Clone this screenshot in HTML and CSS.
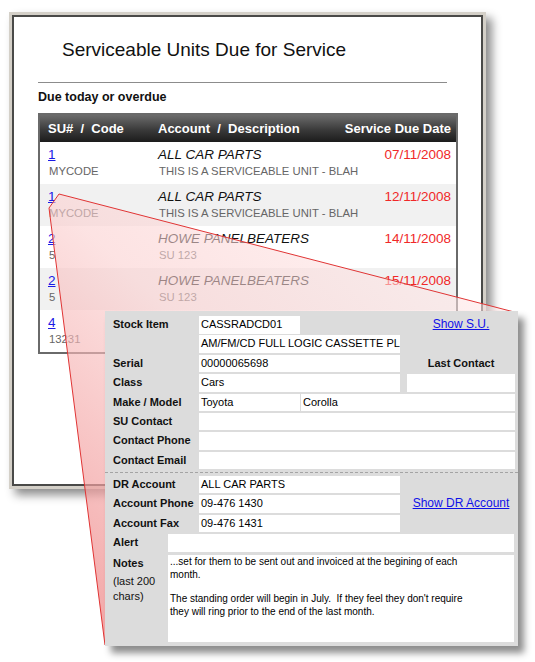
FILE: index.html
```html
<!DOCTYPE html>
<html lang="en">
<head>
  <meta charset="UTF-8" />
  <title>Serviceable Units Due for Service</title>
  <link rel="stylesheet" href="styles.css">
</head>
<body>

  <div class="stage">

    <!-- due list window -->
    <div class="page">
      <h1 class="page_title">Serviceable Units Due for Service</h1>
      <div class="rule"></div>
      <h2 class="section_title">Due today or overdue</h2>

      <div class="units">
        <div class="units_head">
          <span>SU# &nbsp;/ &nbsp;Code</span>
          <span>Account &nbsp;/ &nbsp;Description</span>
          <span class="due">Service Due Date</span>
        </div>

        <div class="unit_row">
          <div><a href="#">1</a><small>MYCODE</small></div>
          <div><em>ALL CAR PARTS</em><small>THIS IS A SERVICEABLE UNIT - BLAH</small></div>
          <div class="due">07/11/2008</div>
        </div>
        <div class="unit_row">
          <div><a href="#">1</a><small>MYCODE</small></div>
          <div><em>ALL CAR PARTS</em><small>THIS IS A SERVICEABLE UNIT - BLAH</small></div>
          <div class="due">12/11/2008</div>
        </div>
        <div class="unit_row">
          <div><a href="#">2</a><small>5</small></div>
          <div><em>HOWE PANELBEATERS</em><small>SU 123</small></div>
          <div class="due">14/11/2008</div>
        </div>
        <div class="unit_row">
          <div><a href="#">2</a><small>5</small></div>
          <div><em>HOWE PANELBEATERS</em><small>SU 123</small></div>
          <div class="due">15/11/2008</div>
        </div>
        <div class="unit_row">
          <div><a href="#">4</a><small>13231</small></div>
          <div></div>
          <div class="due"></div>
        </div>
      </div>
    </div>

    <!-- callout tail from the selected row to the detail panel -->
    <svg class="callout" width="535" height="662" viewBox="0 0 535 662">
      <defs>
        <linearGradient id="tail_fill" x1="1" y1="0" x2="0" y2="1">
          <stop offset="0" stop-color="#fff0f0" stop-opacity="0.55" />
          <stop offset="0.5" stop-color="#fbd0d0" stop-opacity="0.6" />
          <stop offset="1" stop-color="#ec7a7a" stop-opacity="0.75" />
        </linearGradient>
      </defs>
      <polygon points="59,194 518,313 105,645 49,208"
               fill="url(#tail_fill)"
               stroke="#e03434"
               stroke-width="1" />
    </svg>

    <!-- unit detail panel -->
    <div class="detail">
      <div class="detail_grid">
        <div class="label">Stock Item</div>
        <div class="box c1">CASSRADCD01</div>
        <div class="side"><a href="#">Show S.U.</a></div>

        <div class="box c12">AM/FM/CD FULL LOGIC CASSETTE PL</div>

        <div class="label">Serial</div>
        <div class="box c12">00000065698</div>
        <div class="side side_title">Last Contact</div>

        <div class="label">Class</div>
        <div class="box c12">Cars</div>
        <div class="box side"></div>

        <div class="label">Make / Model</div>
        <div class="box c1">Toyota</div>
        <div class="box c2_end">Corolla</div>

        <div class="label">SU Contact</div>
        <div class="box c_all"></div>

        <div class="label">Contact Phone</div>
        <div class="box c_all"></div>

        <div class="label">Contact Email</div>
        <div class="box c_all"></div>
      </div>

      <div class="divider"></div>

      <div class="detail_grid">
        <div class="label">DR Account</div>
        <div class="box c12">ALL CAR PARTS</div>
        <div class="side side_link"><a href="#">Show DR Account</a></div>

        <div class="label">Account Phone</div>
        <div class="box c12">09-476 1430</div>

        <div class="label">Account Fax</div>
        <div class="box c12">09-476 1431</div>
      </div>

      <div class="notes_grid">
        <div class="label">Alert</div>
        <div class="box"></div>

        <div class="label">Notes<span>(last 200 chars)</span></div>
        <div class="box notes">
          <p>...set for them to be sent out and invoiced at the begining of each month.</p>
          <p>The standing order will begin in July.&nbsp; If they feel they don't require they will ring prior to the end of the last month.</p>
        </div>
      </div>
    </div>

  </div>

</body>
</html>
```

FILE: styles.css
```css
body {
  margin: 0;
  padding: 0;
  background: #fff;
  font-family: "Liberation Sans", Arial, sans-serif;
  color: #111;
}

.stage {
  position: relative;
  width: 535px;
  height: 662px;
  overflow: hidden;
  padding: 12px 0 0 9px;
  box-sizing: border-box;
}

/* ========================== */
/* list window */
/* ========================== */

.page {
  width: 477px;
  height: 477px;
  box-sizing: border-box;
  border: 3px solid #d4d0c8;
  box-shadow: inset 0 0 0 2px #4a4a48, 6px 6px 9px rgba(0, 0, 0, 0.45);
  background: #fff;
  padding: 0 25px 0 26px;
}

.page_title {
  margin: 24px 0 0 24px;
  font-size: 19px;
  line-height: 22px;
  font-weight: normal;
  color: #111;
}

.rule {
  margin: 21px 11px 0 0;
  border-top: 1px solid #8c8c8c;
}

.section_title {
  margin: 7px 0 0;
  font-size: 12.5px;
  line-height: 15px;
  font-weight: bold;
  color: #111;
}

.units {
  margin-top: 8px;
  border: 2px solid #6a6a6a;
}

.units_head,
.unit_row {
  display: grid;
  grid-template-columns: 110px 1fr auto;
  padding: 0 5px 0 8px;
}

.units_head {
  height: 27px;
  align-items: center;
  background: linear-gradient(#6c6c6c, #3a3a3a 55%, #1c1c1c);
  color: #fff;
  font-size: 13px;
  font-weight: bold;
}

.unit_row {
  height: 42px;
  box-sizing: border-box;
  padding-top: 5px;
  background: #fff;
}

.unit_row:nth-child(odd) {
  background: #f1f1f1;
}

.unit_row a,
.unit_row em,
.unit_row .due {
  display: block;
  font-size: 13.5px;
  line-height: 16px;
}

.unit_row a {
  color: #1a1ae6;
}

.unit_row em {
  color: #111;
}

.unit_row small {
  display: block;
  font-size: 11.3px;
  line-height: 16px;
  color: #666;
  padding-left: 1px;
}

.due {
  text-align: right;
}

.unit_row .due {
  color: #f02828;
}

/* ========================== */
/* callout tail */
/* ========================== */

.callout {
  position: absolute;
  top: 0;
  left: 0;
  pointer-events: none;
}

/* ========================== */
/* detail panel */
/* ========================== */

.detail {
  position: absolute;
  left: 105px;
  top: 311px;
  width: 413px;
  height: 335px;
  box-sizing: border-box;
  padding-top: 5px;
  background: #dcdcdc;
  box-shadow: 6px 7px 7px rgba(0, 0, 0, 0.45);
}

.detail_grid {
  display: grid;
  grid-template-columns: 86px 101px 1px 99px 7px 108px;
  grid-auto-rows: 17.5px;
  row-gap: 1.9px;
  padding-left: 8px;
}

.label {
  grid-column: 1;
  font-size: 11px;
  font-weight: bold;
  line-height: 17.5px;
  white-space: nowrap;
  color: #111;
}

.box {
  background: #fff;
  font-size: 11px;
  line-height: 17.5px;
  padding-left: 2px;
  white-space: nowrap;
  overflow: hidden;
  color: #000;
}

.c1 { grid-column: 2; }
.c12 { grid-column: 2 / 5; }
.c2_end { grid-column: 4 / 7; }
.c_all { grid-column: 2 / 7; }

.side {
  grid-column: 6;
  text-align: center;
  font-size: 12px;
  line-height: 17.5px;
}

.side a {
  color: #1010e8;
}

.side_title {
  font-size: 11px;
  font-weight: bold;
}

.side_link {
  grid-row: span 3;
  align-self: center;
}

.divider {
  margin: 2.7px 0 3px;
  border-top: 1px dashed #a4a4a4;
}

.notes_grid {
  display: grid;
  grid-template-columns: 55px 346px;
  grid-template-rows: 17.5px 87px;
  row-gap: 3.5px;
  margin-top: 1.9px;
  padding-left: 8px;
}

.notes_grid .label span {
  display: block;
  margin-top: 1px;
  font-weight: normal;
  line-height: 15px;
  white-space: normal;
}

.notes {
  font-size: 10px;
  line-height: 13px;
  white-space: normal;
  padding: 0 2px;
}

.notes p {
  margin: 0;
  width: 300px;
}

.notes p + p {
  margin-top: 11px;
}
```
